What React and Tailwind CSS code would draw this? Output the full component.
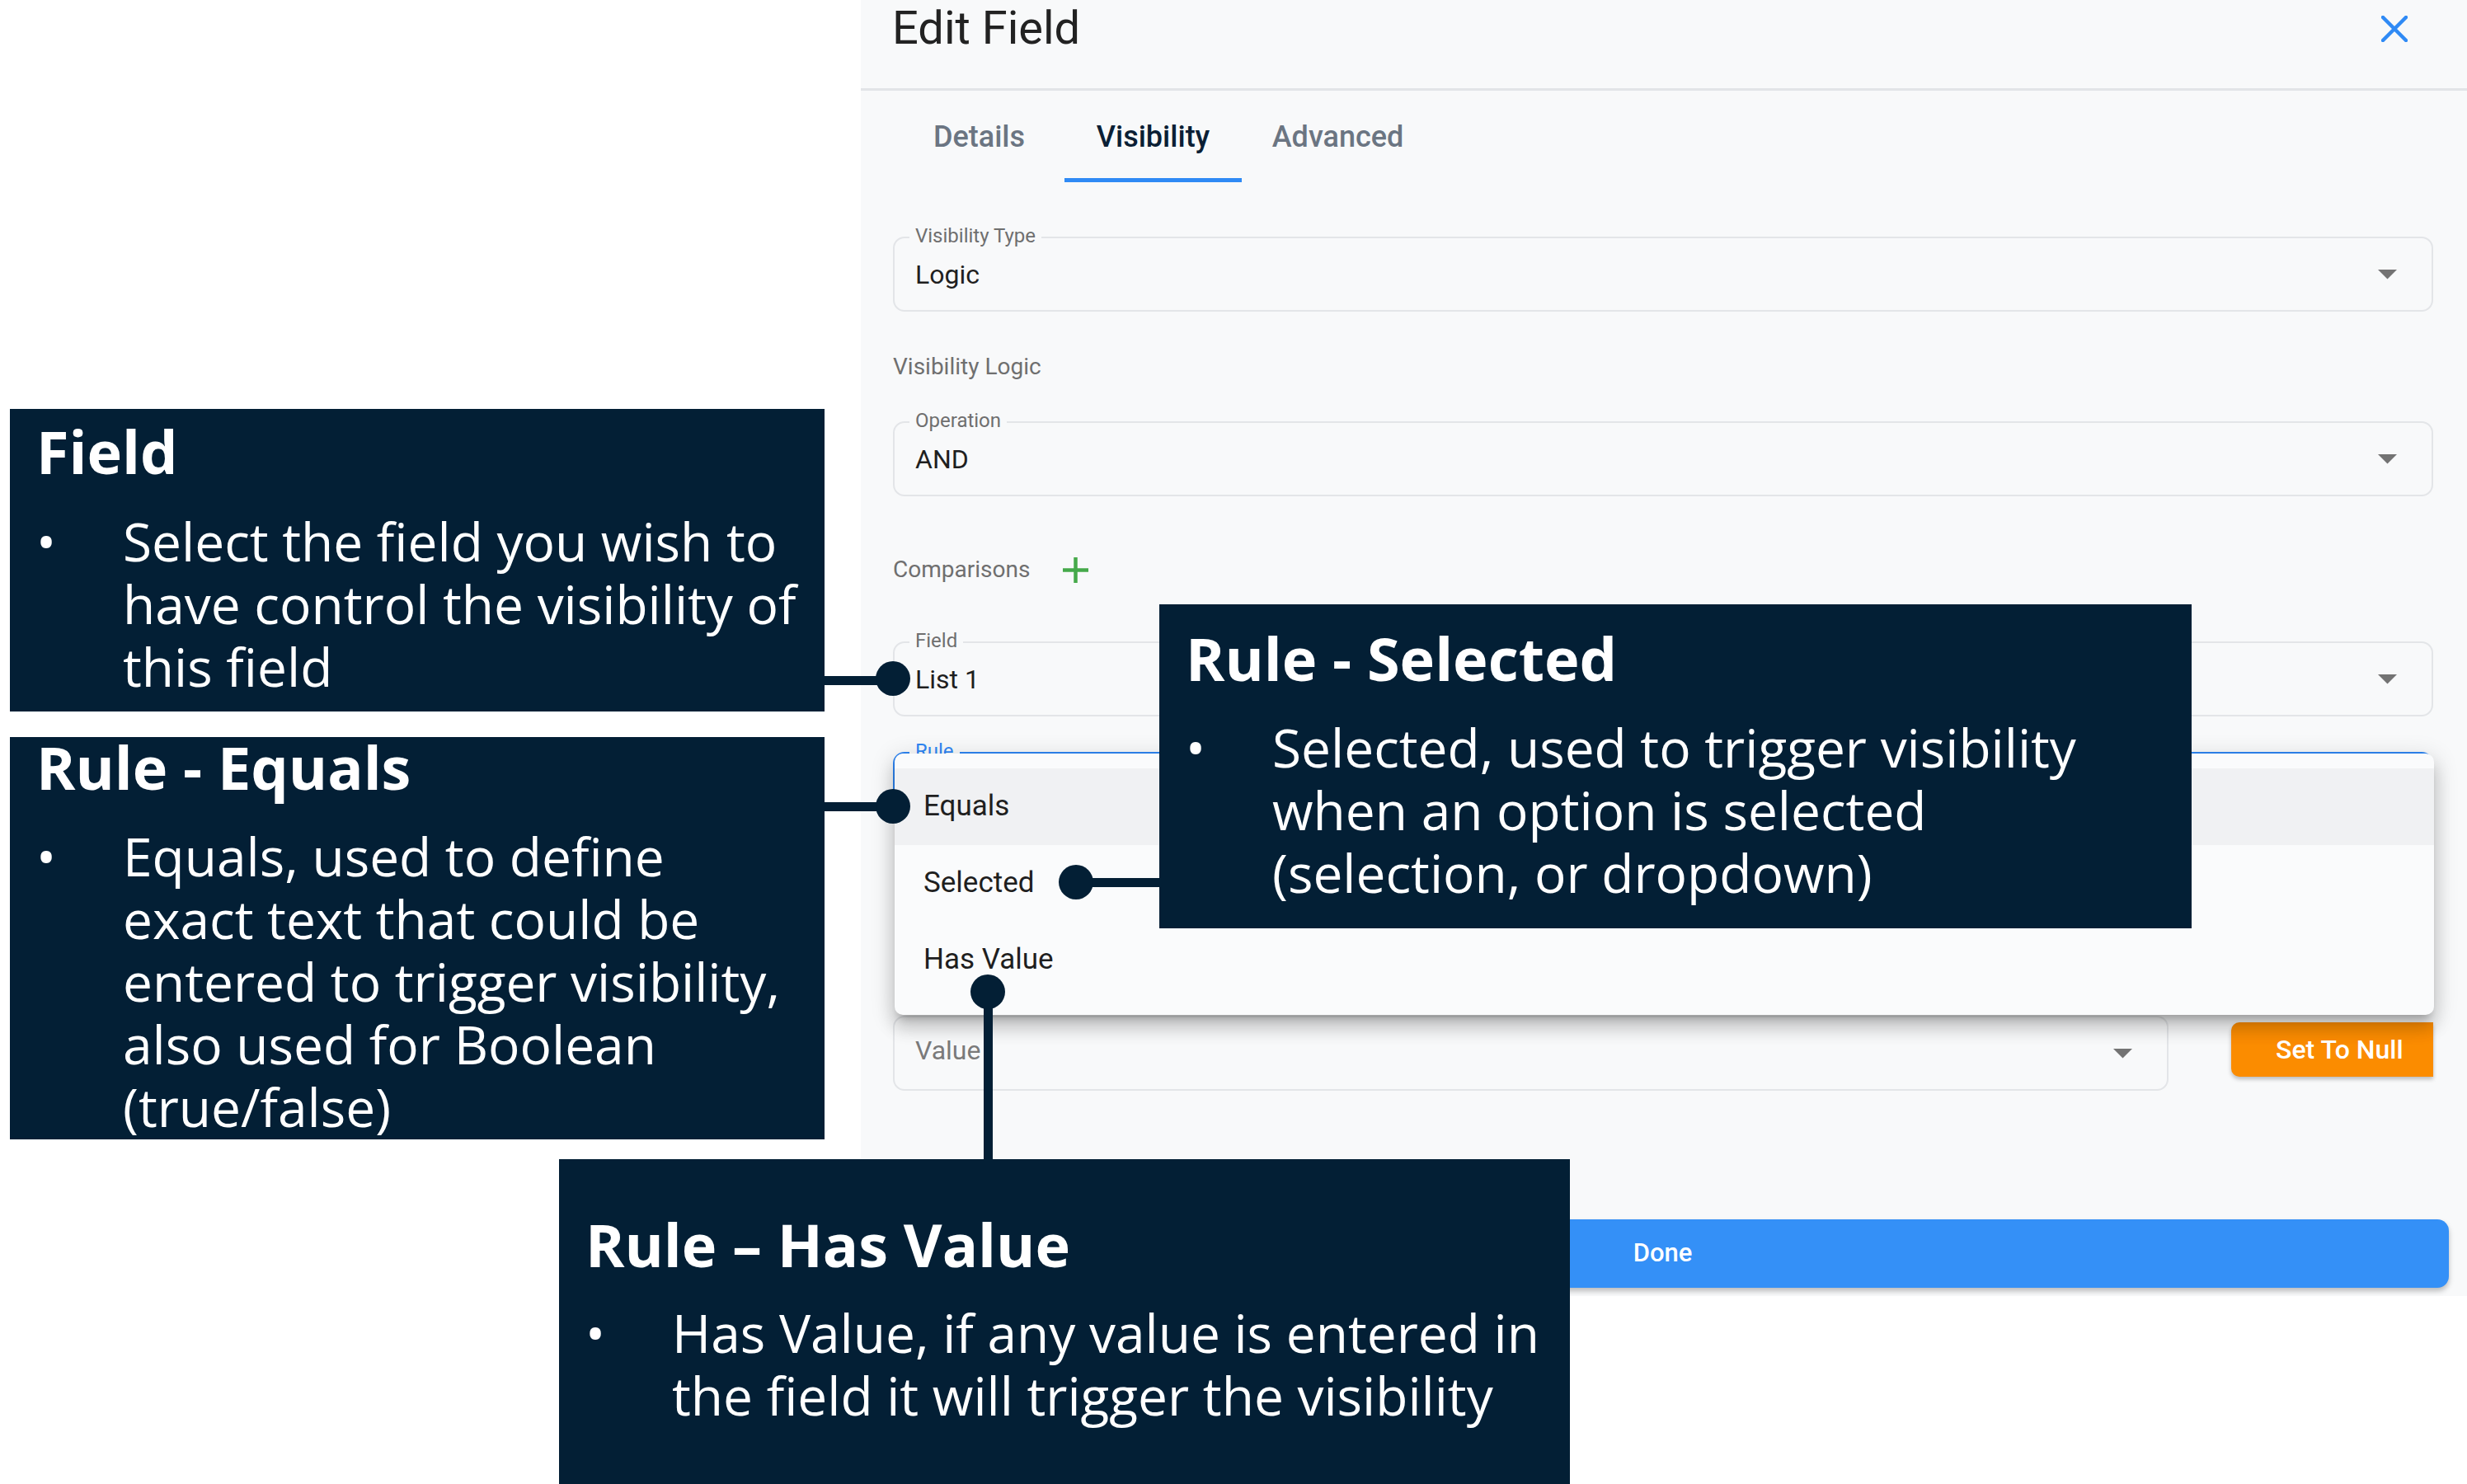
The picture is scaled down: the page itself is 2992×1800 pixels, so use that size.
import React from "react";

function DropArrow() {
  return (
    <svg width="23" height="12" viewBox="0 0 23 12" className="shrink-0">
      <polygon points="0,0 23,0 11.5,11.5" fill="#737373" />
    </svg>
  );
}

function OutlinedSelect({ label, value, placeholder, focused, className = "" }) {
  return (
    <div
      className={`relative flex h-[91px] items-center justify-between rounded-[14px] border-2 pl-[25px] pr-[42px] ${
        focused ? "border-[#2f86f4]" : "border-[#e3e5e8]"
      } ${className}`}
    >
      {label && (
        <span
          className={`absolute left-[18px] top-[-18px] bg-[#f8f9fa] px-[7px] text-[24px] leading-[30px] ${
            focused ? "text-[#2f86f4]" : "text-[#6f6f6f]"
          }`}
        >
          {label}
        </span>
      )}
      {value ? (
        <span className="text-[32px] leading-[40px] text-[#1f1f1f]">{value}</span>
      ) : (
        <span className="-mt-[8px] text-[32px] leading-[40px] text-[#7a7a7a]">{placeholder}</span>
      )}
      <DropArrow />
    </div>
  );
}

function Callout({ className, bodyClass, title, lines }) {
  return (
    <div
      className={`absolute z-20 bg-[#031f35] pl-[32px] font-['Open_Sans',sans-serif] text-white ${className}`}
    >
      <div className="whitespace-nowrap text-[72px] font-bold leading-[72px]">{title}</div>
      <div className={`flex ${bodyClass}`}>
        <span className="w-[105px] shrink-0 text-[64px] leading-[76px]">•</span>
        <div className="text-[64px] leading-[76px]">
          {lines.map((line) => (
            <div key={line} className="whitespace-nowrap">
              {line}
            </div>
          ))}
        </div>
      </div>
    </div>
  );
}

const ruleOptions = ["Equals", "Selected", "Has Value"];

export default function App() {
  return (
    <div className="relative flex h-[1800px] w-[2992px] overflow-hidden bg-white font-['Roboto',sans-serif]">
      <div className="w-[1044px] shrink-0" />

      <div className="flex h-[1572px] flex-1 flex-col bg-[#f8f9fa]">
        {/* header */}
        <div className="flex h-[110px] shrink-0 items-start justify-between border-b-[3px] border-[#e2e4e7]">
          <h1 className="ml-[38px] mt-[6px] text-[56px] leading-none text-[#222222]">Edit Field</h1>
          <svg width="32" height="32" viewBox="0 0 32 32" className="mr-[72px] mt-[19px]">
            <path d="M2 2 L30 30 M30 2 L2 30" stroke="#2f8af5" strokeWidth="4.5" strokeLinecap="round" />
          </svg>
        </div>

        {/* tabs */}
        <div className="ml-[50px] flex h-[111px] shrink-0">
          <div className="flex w-[197px] items-center pl-[38px] text-[36px] font-medium text-[#6b7582]">
            Details
          </div>
          <div className="relative flex w-[215px] items-center justify-center text-[36px] font-medium text-[#0b1f35]">
            Visibility
            <div className="absolute bottom-0 left-0 h-[5px] w-full bg-[#2f8af5]" />
          </div>
          <div className="flex w-[233px] items-center justify-center text-[36px] font-medium text-[#6b7582]">
            Advanced
          </div>
        </div>

        <div className="flex flex-col pl-[39px] pr-[41px]">
          <OutlinedSelect label="Visibility Type" value="Logic" className="mt-[66px]" />

          <div className="mt-[50px] text-[28px] leading-[34px] text-[#6f6f6f]">Visibility Logic</div>

          <OutlinedSelect label="Operation" value="AND" className="mt-[49px]" />

          <div className="mt-[69px] flex h-[40px] items-center gap-[39px]">
            <span className="text-[28px] text-[#6f6f6f]">Comparisons</span>
            <svg width="33" height="33" viewBox="0 0 33 33">
              <path d="M16.5 1 V32 M1 16.5 H32" stroke="#45a94a" strokeWidth="4.5" />
            </svg>
          </div>

          <OutlinedSelect label="Field" value="List 1" className="mt-[67px]" />

          <div className="relative mt-[43px]">
            <OutlinedSelect label="Rule" value="Equals" focused />
            <div className="absolute left-[2px] right-[-1px] top-[2px] z-10 h-[317px] rounded-[10px] bg-[#fafbfc] pt-[18px] shadow-[0_10px_10px_-6px_rgba(0,0,0,0.2),0_16px_20px_2px_rgba(0,0,0,0.14),0_6px_28px_4px_rgba(0,0,0,0.12)]">
              {ruleOptions.map((option, index) => (
                <div
                  key={option}
                  className={`flex h-[93px] items-center pl-[35px] text-[35px] text-[#1f1f1f] ${
                    index === 0 ? "bg-[#f0f1f3]" : ""
                  }`}
                >
                  {option}
                </div>
              ))}
            </div>
          </div>

          <div className="mt-[229px] flex items-start gap-[76px]">
            <OutlinedSelect placeholder="Value" className="h-[90px] flex-1" />
            <button
              type="button"
              className="mt-[8px] flex h-[66px] w-[245px] items-center rounded-l-[10px] bg-[#fb8c00] pl-[54px] text-[32px] font-medium text-white shadow-[0_3px_5px_rgba(0,0,0,0.25)]"
            >
              Set To Null
            </button>
          </div>

          <button
            type="button"
            className="mr-[-19px] mt-[156px] flex h-[83px] items-center justify-center rounded-[14px] bg-[#3490f7] pr-[20px] text-[31px] font-medium text-white shadow-[0_4px_6px_rgba(0,0,0,0.25)]"
          >
            Done
          </button>
        </div>
      </div>

      {/* callouts */}
      <Callout
        className="left-[12px] top-[496px] h-[367px] w-[988px] pt-[15px]"
        bodyClass="mt-[36px]"
        title="Field"
        lines={["Select the field you wish to", "have control the visibility of", "this field"]}
      />
      <Callout
        className="left-[12px] top-[894px] h-[488px] w-[988px] pt-0"
        bodyClass="mt-[35px]"
        title="Rule - Equals"
        lines={[
          "Equals, used to define",
          "exact text that could be",
          "entered to trigger visibility,",
          "also used for Boolean",
          "(true/false)",
        ]}
      />
      <Callout
        className="left-[1406px] top-[733px] h-[393px] w-[1252px] pt-[29px]"
        bodyClass="mt-[35px]"
        title="Rule - Selected"
        lines={["Selected, used to trigger visibility", "when an option is selected", "(selection, or dropdown)"]}
      />
      <Callout
        className="left-[678px] top-[1406px] h-[394px] w-[1226px] pt-[67px]"
        bodyClass="mt-[34px]"
        title="Rule – Has Value"
        lines={["Has Value, if any value is entered in", "the field it will trigger the visibility"]}
      />

      {/* connectors */}
      <div className="absolute left-[1000px] top-[820px] z-20 h-[11px] w-[83px] bg-[#031f35]" />
      <div className="absolute left-[1062px] top-[802px] z-20 h-[42px] w-[42px] rounded-full bg-[#031f35]" />

      <div className="absolute left-[1000px] top-[973px] z-20 h-[11px] w-[83px] bg-[#031f35]" />
      <div className="absolute left-[1062px] top-[957px] z-20 h-[42px] w-[42px] rounded-full bg-[#031f35]" />

      <div className="absolute left-[1305px] top-[1065px] z-20 h-[11px] w-[101px] bg-[#031f35]" />
      <div className="absolute left-[1284px] top-[1049px] z-20 h-[42px] w-[42px] rounded-full bg-[#031f35]" />

      <div className="absolute left-[1193px] top-[1203px] z-20 h-[203px] w-[11px] bg-[#031f35]" />
      <div className="absolute left-[1177px] top-[1182px] z-20 h-[42px] w-[42px] rounded-full bg-[#031f35]" />
    </div>
  );
}
